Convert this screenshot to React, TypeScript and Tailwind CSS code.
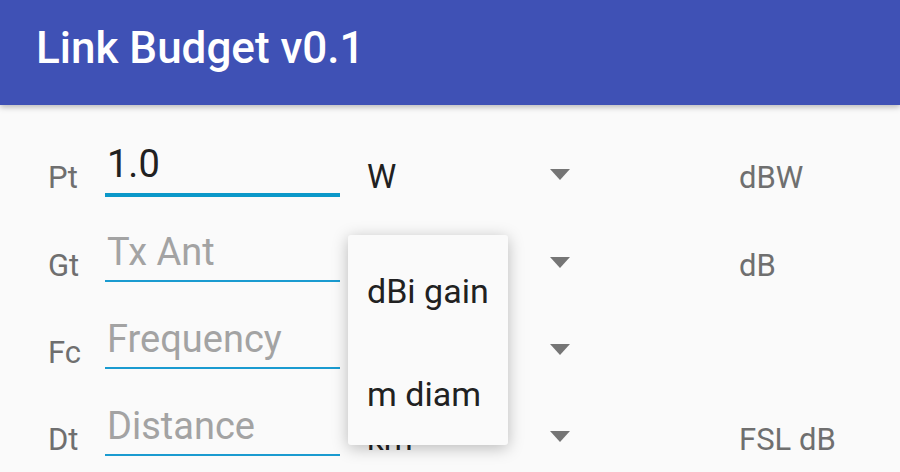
import React from 'react';

interface Row {
  label: string;
  value?: string;
  hint?: string;
  unit: string;
  result?: string;
  focused?: boolean;
  height: string;
}

// spinner values of rows 2 and 3 sit under the open popup, so they stay blank
const rows: Row[] = [
  { label: 'Pt', value: '1.0', unit: 'W', result: 'dBW', focused: true, height: 'h-[88px]' },
  { label: 'Gt', hint: 'Tx Ant', unit: '', result: 'dB', height: 'h-[87px]' },
  { label: 'Fc', hint: 'Frequency', unit: '', height: 'h-[87px]' },
  { label: 'Dt', hint: 'Distance', unit: 'km', result: 'FSL dB', height: 'h-[87px]' },
];

function Caret() {
  return (
    <svg width="20" height="11" viewBox="0 0 20 11" className="block">
      <path d="M0 0 L20 0 L10 11 Z" fill="#757575" />
    </svg>
  );
}

function FieldRow({ row }: { row: Row }) {
  return (
    <div className={`flex items-start ${row.height}`}>
      {/* label */}
      <div className="ml-[48px] w-[57px] mt-[36px] text-[31px] leading-[31px] text-[#6f6f6f]">{row.label}</div>

      {/* edit text */}
      <div className="w-[235px] mt-[19px]">
        <div className="pl-[2px] text-[38px] leading-[38px] whitespace-nowrap">
          {row.value ? (
            <span className="text-[#212121]">{row.value}</span>
          ) : (
            <span className="text-[#a3a3a3]">{row.hint}</span>
          )}
        </div>
        {row.focused ? (
          <div className="mt-[10px] h-[4px] bg-[#0b98c9]" />
        ) : (
          <div className="mt-[9px] h-[2px] bg-[#1a9bd0]" />
        )}
      </div>

      {/* spinner */}
      <div className="ml-[27px] flex items-start">
        <div className="w-[183px] h-[33px] mt-[34px] text-[33px] leading-[33px] text-[#212121] whitespace-nowrap">{row.unit}</div>
        <div className="mt-[43px]">
          <Caret />
        </div>
      </div>

      {/* result unit */}
      <div className="ml-[169px] mt-[36px] text-[31px] leading-[31px] text-[#6f6f6f] whitespace-nowrap">
        {row.result}
      </div>
    </div>
  );
}

export default function App() {
  return (
    <div
      className="relative w-[900px] h-[472px] overflow-hidden bg-[#fafafa]"
      style={{ fontFamily: 'Roboto, "Noto Sans", sans-serif' }}
    >
      <header className="relative z-10 h-[105px] bg-[#3f51b5] shadow-[0_2px_6px_rgba(0,0,0,0.28)]">
        <h1 className="pl-[36px] pt-[26px] text-[44px] leading-[44px] font-medium text-white">Link Budget v0.1</h1>
      </header>

      <div className="pt-[21px]">
        {rows.map((row) => (
          <FieldRow key={row.label} row={row} />
        ))}
      </div>

      {/* open spinner popup */}
      <div className="absolute left-[348px] top-[235px] z-20 w-[160px] h-[210px] pt-[4px] rounded-[3px] bg-[#fafafa] shadow-[0_3px_16px_rgba(0,0,0,0.26)]">
        {['dBi gain', 'm diam'].map((item) => (
          <div key={item} className="h-[103px] flex items-center pl-[19px] text-[34px] leading-[34px] text-[#212121]">
            {item}
          </div>
        ))}
      </div>
    </div>
  );
}
